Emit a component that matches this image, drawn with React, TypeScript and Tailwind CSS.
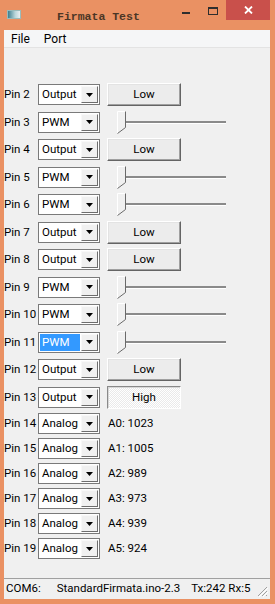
import React from 'react';

type Pin = {
  pin: number;
  mode: 'Output' | 'PWM' | 'Analog';
  value?: string;
  pressed?: boolean;
  selected?: boolean;
};

const pins: Pin[] = [
  { pin: 2, mode: 'Output', value: 'Low' },
  { pin: 3, mode: 'PWM' },
  { pin: 4, mode: 'Output', value: 'Low' },
  { pin: 5, mode: 'PWM' },
  { pin: 6, mode: 'PWM' },
  { pin: 7, mode: 'Output', value: 'Low' },
  { pin: 8, mode: 'Output', value: 'Low' },
  { pin: 9, mode: 'PWM' },
  { pin: 10, mode: 'PWM' },
  { pin: 11, mode: 'PWM', selected: true },
  { pin: 12, mode: 'Output', value: 'Low' },
  { pin: 13, mode: 'Output', value: 'High', pressed: true },
  { pin: 14, mode: 'Analog', value: 'A0: 1023' },
  { pin: 15, mode: 'Analog', value: 'A1: 1005' },
  { pin: 16, mode: 'Analog', value: 'A2: 989' },
  { pin: 17, mode: 'Analog', value: 'A3: 973' },
  { pin: 18, mode: 'Analog', value: 'A4: 939' },
  { pin: 19, mode: 'Analog', value: 'A5: 924' },
];

const ModeSelect: React.FC<{ mode: string; selected?: boolean }> = ({ mode, selected }) => (
  <div className="w-[62px] h-[21px] border border-[#7a7a7a] bg-white flex p-[1px]">
    <div className="flex-1 flex items-center">
      <span
        className={
          selected
            ? 'h-full w-[40px] pl-[2px] bg-[#3399ff] text-white leading-[17px]'
            : 'pl-[2px] text-black leading-[17px]'
        }
      >
        {mode}
      </span>
    </div>
    <div className="w-[17px] h-full bg-[#f0f0f0] border border-t-[#f8f8f8] border-l-[#f8f8f8] border-r-[#6d6d6d] border-b-[#6d6d6d] flex items-center justify-center">
      <svg width="7" height="4" viewBox="0 0 7 4">
        <path d="M0 0h7L3.5 4z" fill="#000" />
      </svg>
    </div>
  </div>
);

const PinButton: React.FC<{ label: string; pressed?: boolean }> = ({ label, pressed }) =>
  pressed ? (
    <div className="w-[74px] h-[23px] border border-t-[#8a8a8a] border-l-[#8a8a8a] border-r-[#ffffff] border-b-[#ffffff] shadow-[inset_1px_1px_0_#d8d8d8] bg-[repeating-conic-gradient(#ffffff_0_25%,#eaeaea_0_50%)] bg-[length:2px_2px] flex items-center justify-center">
      {label}
    </div>
  ) : (
    <div className="w-[74px] h-[23px] border border-t-[#ffffff] border-l-[#ffffff] border-r-[#646464] border-b-[#646464] shadow-[inset_-1px_-1px_0_#a0a0a0,inset_1px_1px_0_#e3e3e3] bg-[#ececec] flex items-center justify-center">
      {label}
    </div>
  );

const Slider: React.FC = () => (
  <div className="flex items-center h-[23px] ml-[10px]">
    <svg width="9" height="23" viewBox="0 0 9 23">
      <path d="M0.5 0.5h8v16l-8 6z" fill="#f0f0f0" />
      <path d="M0.5 22.5V0.5h8" fill="none" stroke="#ffffff" />
      <path d="M8.5 0.5v16l-8 6" fill="none" stroke="#6a6a6a" />
    </svg>
    <div className="w-[100px] flex flex-col">
      <div className="h-[2px] bg-[#8a8a8a]" />
      <div className="h-[1px] bg-[#ffffff]" />
    </div>
  </div>
);

export default function App() {
  return (
    <div className="w-[275px] h-[604px] bg-[#ea9163] flex flex-col font-['Roboto','Liberation_Sans',Arial,sans-serif] text-[11.5px] text-black">
      {/* title bar */}
      <div className="h-[30px] flex items-start relative">
        <div className="mt-[10px] ml-[7px] w-[14px] h-[9px] bg-[linear-gradient(90deg,#3d7f8f,#b9d6da_60%,#e8eef0)] border border-[#9bb]" />
        <div className="ml-[36px] mt-[8px] font-['Liberation_Mono',monospace] font-bold text-[11.5px] text-[#4b3626]">
          Firmata Test
        </div>
        <div className="absolute left-[182px] top-[12px] w-[8px] h-[2px] bg-[#2e2e2e]" />
        <div className="absolute left-[208px] top-[7px] w-[10px] h-[8px] border border-t-2 border-[#2e2e2e]" />
        <div className="absolute left-[226px] top-0 w-[44px] h-[20px] bg-[#c9504b] flex items-center justify-center">
          <svg width="9" height="8" viewBox="0 0 9 8">
            <path d="M1 0.5l7 7M8 0.5l-7 7" stroke="#ffffff" strokeWidth="1.8" />
          </svg>
        </div>
      </div>

      {/* client area */}
      <div className="flex-1 ml-[4px] mr-[5px] mb-[5px] flex flex-col bg-[#f0f0f0]">
        <div className="h-[18px] bg-[#f5f6f7] border-b border-[#e3e3e3] flex items-center text-[12px]">
          <span className="ml-[7px]">File</span>
          <span className="ml-[14px]">Port</span>
        </div>

        <div className="flex-1 pt-[33px] flex flex-col">
          {pins.map((p) => (
            <div
              key={p.pin}
              className={`flex items-center ${p.mode === 'Analog' ? 'h-[25px]' : 'h-[27.5px]'}`}
            >
              <span className="w-[34px] shrink-0 whitespace-nowrap">Pin {p.pin}</span>
              <ModeSelect mode={p.mode} selected={p.selected} />
              <div className="ml-[7px]">
                {p.mode === 'Output' && <PinButton label={p.value!} pressed={p.pressed} />}
                {p.mode === 'PWM' && <Slider />}
                {p.mode === 'Analog' && <span className="ml-[1px]">{p.value}</span>}
              </div>
            </div>
          ))}
        </div>

        <div className="h-[21px] border-t border-[#a0a0a0] flex items-center relative text-[11.5px]">
          <span className="ml-[2px]">COM6:</span>
          <span className="ml-[16px]">StandardFirmata.ino-2.3</span>
          <span className="ml-[11px]">Tx:242 Rx:5</span>
          <svg className="absolute right-[2px] bottom-[2px]" width="12" height="12" viewBox="0 0 12 12">
            <path d="M11 2L2 11M11 6L6 11M11 10L10 11" stroke="#a0a0a0" strokeWidth="1" />
            <path d="M12 3L3 12M12 7L7 12" stroke="#ffffff" strokeWidth="1" />
          </svg>
        </div>
      </div>
    </div>
  );
}
